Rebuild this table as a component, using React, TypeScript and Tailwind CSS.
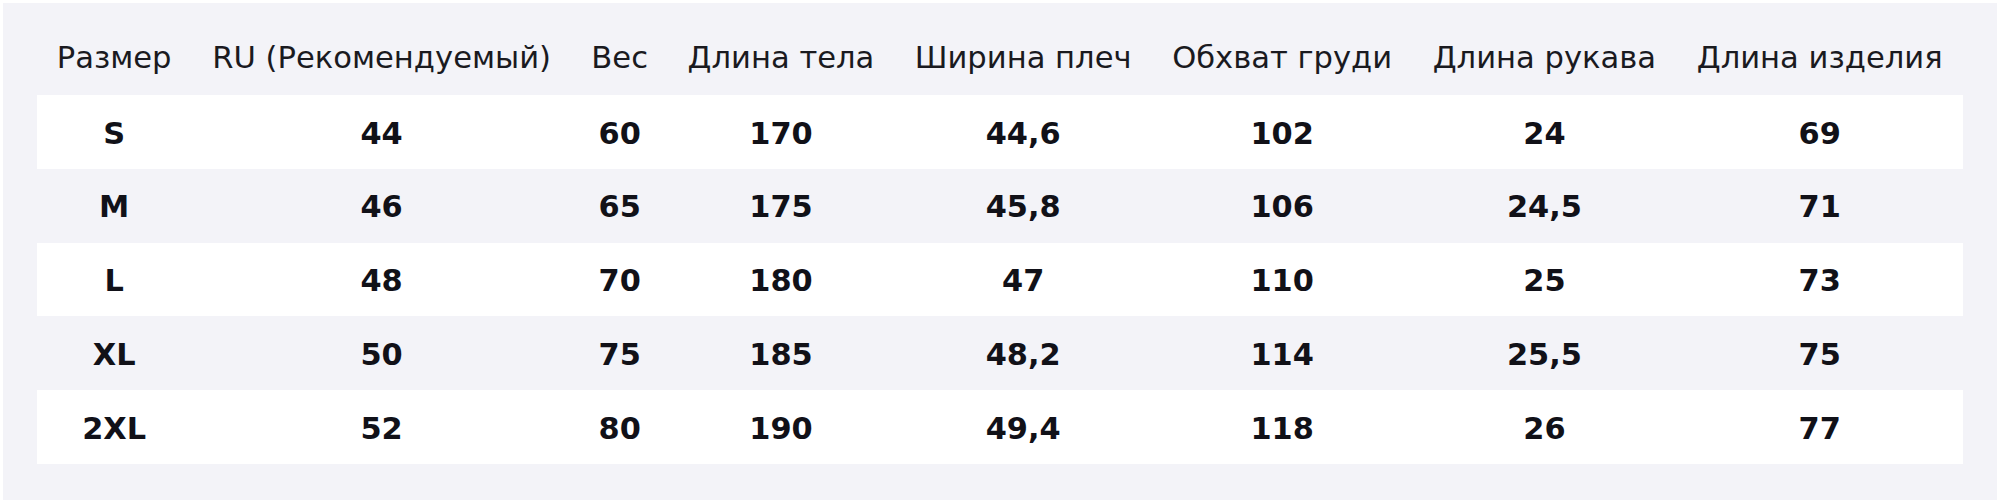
const headers = [
  "Размер",
  "RU (Рекомендуемый)",
  "Вес",
  "Длина тела",
  "Ширина плеч",
  "Обхват груди",
  "Длина рукава",
  "Длина изделия",
];

const rows: string[][] = [
  ["S", "44", "60", "170", "44,6", "102", "24", "69"],
  ["M", "46", "65", "175", "45,8", "106", "24,5", "71"],
  ["L", "48", "70", "180", "47", "110", "25", "73"],
  ["XL", "50", "75", "185", "48,2", "114", "25,5", "75"],
  ["2XL", "52", "80", "190", "49,4", "118", "26", "77"],
];

export default function App() {
  return (
    <div className="bg-white p-[3px] font-['DejaVu_Sans',sans-serif]">
      <div className="bg-[#f3f3f8] px-[34px] pt-[20px] pb-[36px]">
        <table className="w-full table-auto border-collapse text-[30.4px] text-[#111118]">
          <thead>
            <tr className="h-[72px]">
              {headers.map((h) => (
                <th key={h} className="px-[19px] pb-0.5 text-center text-[30.6px] font-normal whitespace-nowrap text-[#1a1a1f]">
                  {h}
                </th>
              ))}
            </tr>
          </thead>
          <tbody>
            {rows.map((r, i) => (
              <tr key={r[0]} className={`h-[73.8px] ${i % 2 === 0 ? "bg-white" : "bg-transparent"}`}>
                {r.map((c, j) => (
                  <td key={j} className="px-[19px] pt-[3px] text-center font-bold">
                    {c}
                  </td>
                ))}
              </tr>
            ))}
          </tbody>
        </table>
      </div>
    </div>
  );
}
